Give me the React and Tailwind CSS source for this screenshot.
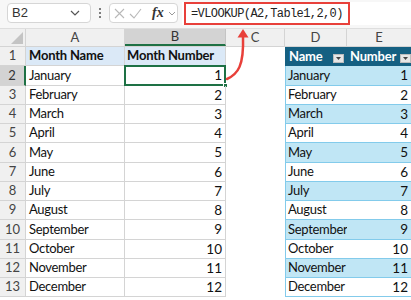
import React from "react";

const months = [
  "January","February","March","April","May","June","July","August","September","October","November","December",
];

function FilterBtn({ className }) {
  return (
    <div className={"absolute top-[7px] w-[11px] h-[9px] bg-[#e6e6e6] border border-[#bdbdbd] flex items-center justify-center " + className}>
      <svg width="5" height="3" viewBox="0 0 5 3"><path d="M0 0 L5 0 L2.5 3 Z" fill="#444" /></svg>
    </div>
  );
}

export default function App() {
  return (
    <div className="w-[411px] h-[300px] overflow-hidden bg-white relative font-['Lato',sans-serif] text-[#111]">
      {/* Toolbar */}
      <div className="h-[29px] bg-[#f7f7f7] border-b border-[#dedede] flex items-start pt-[3px]">
        <div className="ml-[7px] w-[84px] h-[20px] bg-white border border-[#d6d6d6] rounded-[4px] flex items-center pl-[4px] pr-[10px] justify-between">
          <span className="text-[13px] text-[#333] font-['Liberation_Sans',sans-serif]">B2</span>
          <svg width="10" height="6" viewBox="0 0 10 6"><path d="M1 1 L5 5 L9 1" fill="none" stroke="#555" strokeWidth="1.2" /></svg>
        </div>
        <div className="w-[18px] h-[20px] flex flex-col items-center justify-center gap-[2px]">
          <div className="w-[2px] h-[2px] bg-[#555] rounded-full" />
          <div className="w-[2px] h-[2px] bg-[#555] rounded-full" />
          <div className="w-[2px] h-[2px] bg-[#555] rounded-full" />
        </div>
        <div className="w-[69px] h-[20px] bg-white border border-[#d6d6d6] rounded-[4px] flex items-center pl-[4px] gap-[4px]">
          <svg width="11" height="11" viewBox="0 0 11 11"><path d="M1 1 L10 10 M10 1 L1 10" stroke="#b8b8b8" strokeWidth="1.1" /></svg>
          <svg width="13" height="11" viewBox="0 0 13 11"><path d="M1 6 L5 10 L12 1" fill="none" stroke="#b8b8b8" strokeWidth="1.1" /></svg>
          <span className="ml-[6px] text-[14px] italic font-bold font-['Liberation_Serif',serif] text-[#333] leading-none">fx</span>
          <svg width="8" height="5" viewBox="0 0 8 5"><path d="M1 1 L4 4 L7 1" fill="none" stroke="#999" strokeWidth="1" /></svg>
        </div>
        <div className="ml-[4px] flex-1 h-[23px] -mt-[1px] bg-white flex items-center">
          <div className="ml-[2px] w-[166px] h-[23px] border-2 border-[#e8403a] flex items-center pl-[5px]">
            <span className="font-['Liberation_Mono',monospace] text-[12px] tracking-[-0.6px] text-[#222]">=VLOOKUP(A2,Table1,2,0)</span>
          </div>
        </div>
      </div>

      {/* Column headers */}
      <div className="h-[18px] flex bg-[#f0f0f0] border-b border-[#d4d4d4] text-[13px] text-[#444]">
        <div className="w-[26px] relative border-r border-[#d4d4d4]">
          <svg className="absolute right-[2px] bottom-[2px]" width="12" height="12" viewBox="0 0 12 12"><path d="M12 0 L12 12 L0 12 Z" fill="#c4c4c4" /></svg>
        </div>
        <div className="w-[99px] flex items-center justify-center border-r border-[#d4d4d4]">A</div>
        <div className="w-[101px] flex items-center justify-center bg-[#d3d3d3] border-b-2 border-[#1e7145] border-r border-r-[#c4c4c4] text-[#333]">B</div>
        <div className="w-[59px] flex items-center justify-center border-r border-[#d4d4d4]">C</div>
        <div className="w-[62px] flex items-center justify-center border-r border-[#d4d4d4]">D</div>
        <div className="w-[64px] flex items-center justify-center">E</div>
      </div>

      {/* Row 1 */}
      <div className="h-[19.25px] flex text-[13px] tracking-[-0.2px]">
        <div className="w-[26px] bg-[#f0f0f0] border-r border-b border-[#d4d4d4] flex items-center justify-center text-[13px] text-[#444] tracking-normal">1</div>
        <div className="w-[99px] bg-[#dbe9f7] border-r border-b border-[#d4d4d4] flex items-center pl-[3px] font-bold">Month Name</div>
        <div className="w-[101px] bg-[#dbe9f7] border-r border-b border-[#d4d4d4] flex items-center pl-[2px] font-bold">Month Number</div>
        <div className="w-[59px]" />
        <div className="w-[62px] bg-[#156082] text-white font-bold flex items-center pl-[4px] relative">
          Name
          <FilterBtn className="right-[3px]" />
        </div>
        <div className="w-[64px] bg-[#156082] text-white font-bold flex items-center pl-[3px] relative overflow-hidden whitespace-nowrap">
          Number
          <FilterBtn className="right-[0px]" />
        </div>
      </div>

      {months.map((m, i) => {
        const band = i % 2 === 0;
        const sel = i === 0;
        return (
          <div key={m} className="h-[19.25px] flex text-[13.5px]">
            <div className={"w-[26px] border-b border-[#d4d4d4] flex items-center justify-center text-[13px] " + (sel ? "bg-[#d3d3d3] border-r-2 border-r-[#1e7145] text-[#333]" : "bg-[#f0f0f0] border-r text-[#444]")}>{i + 2}</div>
            <div className="w-[99px] border-r border-b border-[#d4d4d4] flex items-center pl-[3px] text-[13px] tracking-[-0.3px]">{m}</div>
            <div className="w-[101px] border-r border-b border-[#d4d4d4] flex items-center justify-end pr-[3px] relative">
              {i + 1}
              {sel && (
                <>
                  <div className="absolute -left-[1px] -top-[1px] -right-[1px] -bottom-[1px] border-2 border-[#1e7145]" />
                  <div className="absolute -right-[3px] -bottom-[3px] w-[5px] h-[5px] bg-[#1e7145] border border-white" />
                </>
              )}
            </div>
            <div className="w-[59px]" />
            <div className={"w-[62px] border-l border-b border-[#83cbeb] flex items-center pl-[2px] text-[13px] tracking-[-0.3px] whitespace-nowrap overflow-hidden " + (band ? "bg-[#c0e6f5]" : "bg-white")}>{m}</div>
            <div className={"w-[64px] border-b border-[#83cbeb] flex items-center justify-end pr-[3px] " + (band ? "bg-[#c0e6f5]" : "bg-white")}>{i + 1}</div>
          </div>
        );
      })}

      {/* Arrow annotation */}
      <svg className="absolute left-0 top-0 pointer-events-none" width="411" height="300" viewBox="0 0 411 300">
        <path d="M227 79 C238 74, 244 66, 243 36" fill="none" stroke="#e8403a" strokeWidth="2.5" strokeLinecap="round" />
        <path d="M243 29 L237.5 37.5 L248.5 37.5 Z" fill="#e8403a" />
      </svg>
    </div>
  );
}
